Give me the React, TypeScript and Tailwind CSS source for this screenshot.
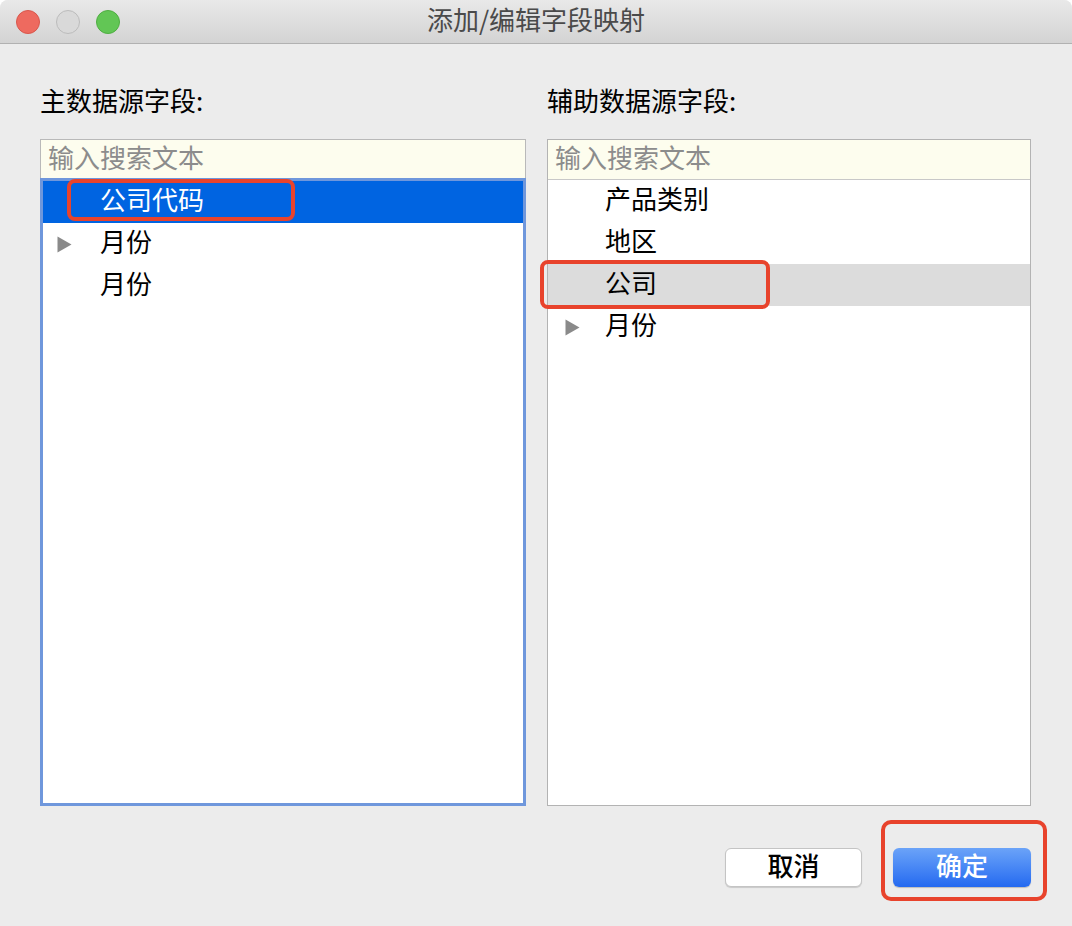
import React from "react";

const font = { fontFamily: '"Noto Sans CJK SC", "Noto Sans", sans-serif' };

function Tri() {
  return (
    <svg width="15" height="17" viewBox="0 0 15 17" className="shrink-0">
      <polygon points="0.5,0.5 14.5,8.5 0.5,16.5" fill="#8a8a8a" />
    </svg>
  );
}

function Row({
  text,
  tri,
  className = "",
  textClass = "text-black",
  triLeft = "pl-[17px]",
}: {
  text: string;
  tri?: boolean;
  className?: string;
  textClass?: string;
  triLeft?: string;
}) {
  return (
    <div className={`h-[42px] flex items-center ${className}`}>
      <div className={`${triLeft} w-[57px] shrink-0 flex items-center`}>{tri ? <Tri /> : null}</div>
      <span className={`text-[26px] leading-none -translate-y-[3px] ${textClass}`}>{text}</span>
    </div>
  );
}

export default function App() {
  return (
    <div className="w-[1072px] h-[926px] bg-[#ececec] flex flex-col overflow-hidden rounded-t-[8px]" style={font}>
      {/* Title bar */}
      <div className="relative h-[44px] shrink-0 bg-gradient-to-b from-[#e9e9e9] to-[#d3d3d3] border-b border-[#b1b1b1] flex items-center">
        <div className="flex items-center gap-[16px] pl-[16px]">
          <div className="w-[24px] h-[24px] rounded-full bg-[#ee6a5f] border border-[#d9574c]" />
          <div className="w-[24px] h-[24px] rounded-full bg-[#d9d9d9] border border-[#bcbcbc]" />
          <div className="w-[24px] h-[24px] rounded-full bg-[#62c655] border border-[#4fae42]" />
        </div>
        <div className="absolute inset-0 flex items-center justify-center pointer-events-none">
          <span className="text-[26px] text-[#4a4a4a] leading-none -translate-y-[3px]">添加/编辑字段映射</span>
        </div>
      </div>

      {/* Body */}
      <div className="flex gap-[21px] pl-[40px] pr-[41px] pt-[46px]">
        {/* Left */}
        <div className="w-[486px] flex flex-col">
          <div className="text-[26px] leading-none text-black h-[26px] mb-[23px] -translate-y-[3px]">主数据源字段:</div>
          <div className="flex flex-col h-[667px]">
            <div className="h-[41px] shrink-0 bg-[#fdfdee] border border-[#b9b9b9] border-b-[#dcdcdc] flex items-center pl-[7px]">
              <span className="text-[26px] leading-none text-[#8c8c8c] -translate-y-[3px]">输入搜索文本</span>
            </div>
            <div className="flex-1 bg-white border-[3px] border-[#6f97dc] -mt-[2px] flex flex-col">
              <div className="relative">
                <Row text="公司代码" className="bg-[#0064e1] h-[40px]" textClass="text-white" triLeft="pl-[14px]" />
                <div className="absolute left-[24px] top-[-2px] w-[228px] h-[42px] rounded-[8px] border-[4px] border-[#e8432c]" />
              </div>
              <Row text="月份" tri triLeft="pl-[14px]" />
              <Row text="月份" triLeft="pl-[14px]" />
            </div>
          </div>
        </div>

        {/* Right */}
        <div className="w-[484px] flex flex-col">
          <div className="text-[26px] leading-none text-black h-[26px] mb-[23px] -translate-y-[3px]">辅助数据源字段:</div>
          <div className="flex flex-col h-[667px] border border-[#b3b3b3] bg-white">
            <div className="h-[40px] shrink-0 bg-[#fdfdee] border-b border-[#c8c8c8] flex items-center pl-[7px]">
              <span className="text-[26px] leading-none text-[#8c8c8c] -translate-y-[3px]">输入搜索文本</span>
            </div>
            <div className="flex flex-col">
              <Row text="产品类别" />
              <Row text="地区" />
              <div className="relative">
                <Row text="公司" className="bg-[#dcdcdc]" />
                <div className="absolute left-[-8px] top-[-4px] w-[230px] h-[49px] rounded-[8px] border-[4px] border-[#e8432c]" />
              </div>
              <Row text="月份" tri />
            </div>
          </div>
        </div>
      </div>

      {/* Buttons */}
      <div className="flex justify-end items-center gap-[31px] pr-[41px] mt-[42px]">
        <button className="w-[137px] h-[39px] rounded-[6px] bg-white border border-[#c4c4c4] shadow-[0_1px_1px_rgba(0,0,0,0.15)] text-[26px] leading-none text-black font-medium">
          <span className="inline-block -translate-y-[3px]">取消</span>
        </button>
        <div className="relative">
          <button className="w-[138px] h-[39px] rounded-[6px] bg-gradient-to-b from-[#6ba3f8] to-[#2469f0] text-[26px] leading-none text-white font-medium shadow-[0_1px_1px_rgba(0,0,0,0.2)]">
            <span className="inline-block -translate-y-[3px]">确定</span>
          </button>
          <div className="absolute left-[-12px] top-[-28px] w-[166px] h-[81px] rounded-[10px] border-[4px] border-[#e8432c]" />
        </div>
      </div>
    </div>
  );
}
